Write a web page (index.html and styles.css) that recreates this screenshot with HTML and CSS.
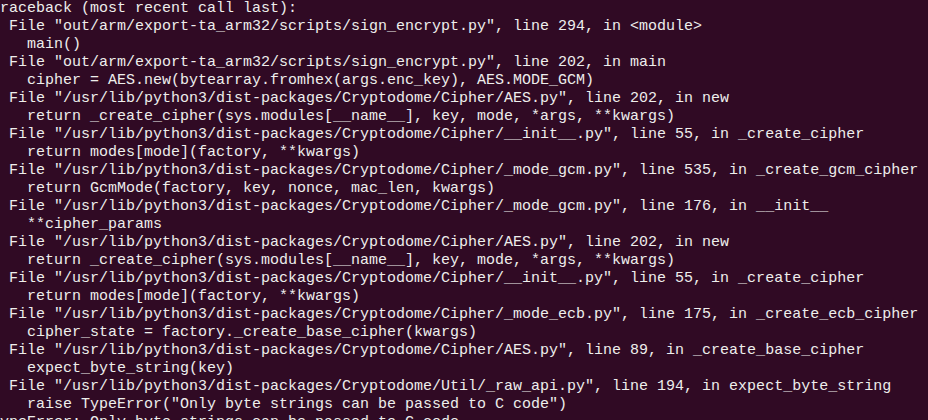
FILE: index.html
```html
<!DOCTYPE html>
<html>
<head>
<meta charset="utf-8">
<link rel="stylesheet" href="styles.css">
</head>
<body>
<pre class="term">Traceback (most recent call last):
  File "out/arm/export-ta_arm32/scripts/sign_encrypt.py", line 294, in &lt;module&gt;
    main()
  File "out/arm/export-ta_arm32/scripts/sign_encrypt.py", line 202, in main
    cipher = AES.new(bytearray.fromhex(args.enc_key), AES.MODE_GCM)
  File "/usr/lib/python3/dist-packages/Cryptodome/Cipher/AES.py", line 202, in new
    return _create_cipher(sys.modules[__name__], key, mode, *args, **kwargs)
  File "/usr/lib/python3/dist-packages/Cryptodome/Cipher/__init__.py", line 55, in _create_cipher
    return modes[mode](factory, **kwargs)
  File "/usr/lib/python3/dist-packages/Cryptodome/Cipher/_mode_gcm.py", line 535, in _create_gcm_cipher
    return GcmMode(factory, key, nonce, mac_len, kwargs)
  File "/usr/lib/python3/dist-packages/Cryptodome/Cipher/_mode_gcm.py", line 176, in __init__
    **cipher_params
  File "/usr/lib/python3/dist-packages/Cryptodome/Cipher/AES.py", line 202, in new
    return _create_cipher(sys.modules[__name__], key, mode, *args, **kwargs)
  File "/usr/lib/python3/dist-packages/Cryptodome/Cipher/__init__.py", line 55, in _create_cipher
    return modes[mode](factory, **kwargs)
  File "/usr/lib/python3/dist-packages/Cryptodome/Cipher/_mode_ecb.py", line 175, in _create_ecb_cipher
    cipher_state = factory._create_base_cipher(kwargs)
  File "/usr/lib/python3/dist-packages/Cryptodome/Cipher/AES.py", line 89, in _create_base_cipher
    expect_byte_string(key)
  File "/usr/lib/python3/dist-packages/Cryptodome/Util/_raw_api.py", line 194, in expect_byte_string
    raise TypeError("Only byte strings can be passed to C code")
TypeError: Only byte strings can be passed to C code</pre>
</body>
</html>
```
FILE: styles.css
```css
html, body {
  margin: 0;
  padding: 0;
  background: #300a24;
  width: 928px;
  height: 420px;
  overflow: hidden;
}
.term {
  margin: 0 0 0 -9px;
  padding: 0;
  font-family: "Liberation Mono", "DejaVu Sans Mono", monospace;
  font-size: 15px;
  line-height: 18px;
  color: #eeeeec;
  white-space: pre;
}
```
